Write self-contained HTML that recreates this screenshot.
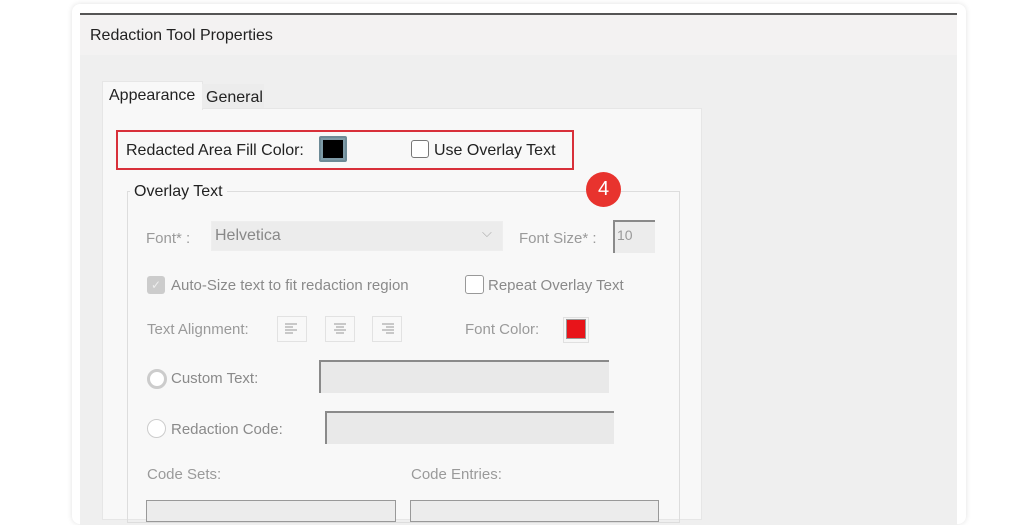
<!DOCTYPE html>
<html><head><style>
body{margin:0;width:1024px;height:512px;background:#fff;position:relative;overflow:hidden;font-family:"Liberation Sans",sans-serif;}
.a{position:absolute}
.card{left:72px;top:4px;width:894px;height:520px;background:#fff;border-radius:8px;box-shadow:0 0 6px rgba(0,0,0,.12)}
.win{left:80px;top:13px;width:877px;height:510px;background:#efefef;border-top:2px solid #555}
.t{font-size:16px;color:#222}
.g{font-size:15px;color:#9a9a9a}
.field{background:#e9e9e9;border-top:2px solid #8a8a8a;border-left:2px solid #8a8a8a}
.ab{width:28px;height:24px;border:1px solid #e2e2e2;background:#f8f8f8}
.ab svg{position:absolute;left:7px;top:6px}
</style></head><body>
<div class="a card"></div>
<div class="a win"></div>
<div class="a" style="left:80px;top:15px;width:877px;height:40px;background:#f3f2f2"></div>
<div class="a t" style="left:90px;top:27px;font-size:16px">Redaction Tool Properties</div>
<div class="a" style="left:102px;top:108px;width:598px;height:410px;background:#f8f8f8;border:1px solid #e6e6e6"></div>
<div class="a" style="left:102px;top:81px;width:99px;height:28px;background:#f8f8f8;border:1px solid #e6e6e6;border-bottom:none"></div>
<div class="a t" style="left:109px;top:87px">Appearance</div>
<div class="a" style="left:202px;top:84px;width:62px;height:24px;background:#ececec"></div>
<div class="a t" style="left:206px;top:89px">General</div>
<div class="a" style="left:116px;top:130px;width:454px;height:36px;border:2px solid #d8303a"></div>
<div class="a t" style="left:126px;top:142px">Redacted Area Fill Color:</div>
<div class="a" style="left:319px;top:136px;width:24px;height:22px;border:2px solid #6d8a96;border-radius:2px;background:#7d9aa6"><div style="margin:2px;width:20px;height:18px;background:#000"></div></div>
<div class="a" style="left:411px;top:140px;width:16px;height:16px;border:1px solid #777;border-radius:3px;background:#fff"></div>
<div class="a t" style="left:434px;top:142px">Use Overlay Text</div>
<div class="a" style="left:127px;top:191px;width:551px;height:330px;border:1px solid #ddd"></div>
<div class="a t" style="left:130px;top:183px;background:#f8f8f8;padding:0 4px">Overlay Text</div>
<div class="a" style="left:586px;top:172px;width:35px;height:35px;border-radius:50%;background:#e8332e;color:#fff;font-size:20px;text-align:center;line-height:35px">4</div>
<div class="a g" style="left:146px;top:230px">Font* :</div>
<div class="a" style="left:211px;top:221px;width:290px;height:28px;border:1px solid #eee;background:#ececec"></div>
<div class="a" style="left:215px;top:227px;font-size:16px;color:#888">Helvetica</div>
<div class="a" style="left:482px;top:225px;font-size:13px;color:#aaa">⌵</div>
<div class="a g" style="left:519px;top:230px">Font Size* :</div>
<div class="a field" style="left:613px;top:220px;width:40px;height:31px;background:#ececec"></div>
<div class="a" style="left:617px;top:227px;font-size:14px;color:#999">10</div>
<div class="a" style="left:147px;top:276px;width:18px;height:18px;background:#ccc;border-radius:3px;color:#eee;font-size:12px;text-align:center;line-height:18px">✓</div>
<div class="a g" style="left:171px;top:277px;color:#8a8a8a">Auto-Size text to fit redaction region</div>
<div class="a" style="left:465px;top:275px;width:17px;height:17px;border:1px solid #999;border-radius:3px;background:#fff"></div>
<div class="a g" style="left:488px;top:277px;color:#8a8a8a">Repeat Overlay Text</div>
<div class="a g" style="left:147px;top:321px">Text Alignment:</div>
<div class="a ab" style="left:277px;top:316px"><svg width="14" height="11"><path d="M0 1h12M0 4h8M0 7h12M0 10h8" stroke="#aaa" stroke-width="1.2"/></svg></div>
<div class="a ab" style="left:325px;top:316px"><svg width="14" height="11"><path d="M1 1h12M3 4h8M1 7h12M3 10h8" stroke="#aaa" stroke-width="1.2"/></svg></div>
<div class="a ab" style="left:372px;top:316px"><svg width="14" height="11"><path d="M2 1h12M6 4h8M2 7h12M6 10h8" stroke="#aaa" stroke-width="1.2"/></svg></div>
<div class="a g" style="left:465px;top:321px">Font Color:</div>
<div class="a" style="left:563px;top:317px;width:24px;height:24px;border:1px solid #e0e0e0;background:#f6f6f6"></div>
<div class="a" style="left:566px;top:319px;width:18px;height:18px;background:#e8141a;border:1px solid #999"></div>
<div class="a" style="left:147px;top:369px;width:14px;height:14px;border:3px solid #ccc;border-radius:50%;background:#fff"></div>
<div class="a g" style="left:171px;top:370px;color:#8a8a8a">Custom Text:</div>
<div class="a field" style="left:319px;top:360px;width:288px;height:31px"></div>
<div class="a" style="left:147px;top:419px;width:17px;height:17px;border:1px solid #ccc;border-radius:50%;background:#fff"></div>
<div class="a g" style="left:171px;top:421px;color:#8a8a8a">Redaction Code:</div>
<div class="a field" style="left:325px;top:411px;width:287px;height:31px"></div>
<div class="a g" style="left:147px;top:466px">Code Sets:</div>
<div class="a g" style="left:411px;top:466px">Code Entries:</div>
<div class="a" style="left:146px;top:500px;width:248px;height:20px;border:1px solid #999;background:#ececec"></div>
<div class="a" style="left:410px;top:500px;width:247px;height:20px;border:1px solid #999;background:#ececec"></div>
</body></html>
